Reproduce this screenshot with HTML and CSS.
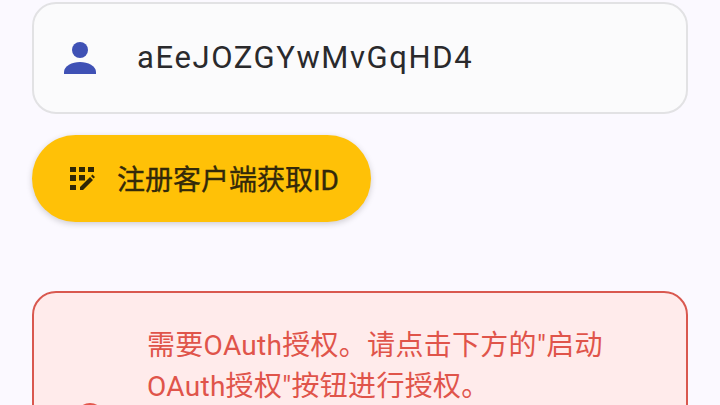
FILE: index.html
```html
<!DOCTYPE html>
<html lang="zh-CN">
<head>
<meta charset="utf-8">
<title>OAuth</title>
<link rel="stylesheet" href="styles.css">
</head>
<body>
<main class="page">
  <div class="field">
    <svg class="field-icon" viewBox="0 0 32 32" aria-hidden="true"><circle cx="16" cy="8" r="8"/><path d="M0 32v-2c0-6 8-10 16-10s16 4 16 10v2z"/></svg>
    <span class="field-value">aEeJOZGYwMvGqHD4</span>
  </div>
  <button class="action" type="button">
    <svg class="action-icon" viewBox="0 0 25 23" aria-hidden="true"><path d="M0 0h6v5H0zM9 0h6v5H9zM18 0h6v5h-6zM0 8h6v6H0zM9 8h6v5.500H9zM0 18h6v5H0zM10 23v-3L20 10l3 3L13 23zM21 9l1.500-1.500L25 10l-1.500 1.500z"/></svg>
    <span class="action-label">注册客户端获取ID</span>
  </button>
  <section class="notice">
    <svg class="notice-icon" viewBox="0 0 24 24" aria-hidden="true"><circle cx="12" cy="12" r="10.500"/></svg>
    <p class="notice-text">需要OAuth授权。请点击下方的"启动OAuth授权"按钮进行授权。</p>
  </section>
</main>
</body>
</html>
```
FILE: styles.css
```css
html, body {
  margin: 0;
  padding: 0;
  height: 405px;
  overflow: hidden;
  background: #fbf9ff;
}

.page {
  display: flex;
  flex-direction: column;
  align-items: flex-start;
  padding: 2px 32px 0;
  font-family: Roboto, "Noto Sans CJK SC", sans-serif;
}

.field {
  box-sizing: border-box;
  width: 656px;
  height: 112px;
  display: flex;
  align-items: center;
  padding-left: 30px;
  gap: 41px;
  background: #fbfbfc;
  border: 2px solid #e2e2e4;
  border-radius: 24px;
}

.field-icon {
  width: 32px;
  height: 32px;
  fill: #3f51b5;
  flex: none;
}

.field-value {
  font-size: 31px;
  color: #2a2a2c;
  letter-spacing: 1.6px;
  margin-bottom: 2px;
}

.action {
  margin-top: 21px;
  width: 339px;
  height: 87px;
  display: flex;
  align-items: center;
  gap: 22px;
  padding: 0 0 0 38px;
  border: 0;
  border-radius: 44px;
  background: #ffc107;
  box-shadow: 0 2px 6px rgba(0, 0, 0, 0.18);
  font: inherit;
  font-size: 28px;
  color: #33290a;
}

.action-icon {
  width: 25px;
  height: 23px;
  fill: #2f2606;
  flex: none;
}

.action-label {
  margin-bottom: 2px;
  -webkit-text-stroke: 0.35px #33290a;
}

.notice {
  box-sizing: border-box;
  margin-top: 69px;
  width: 656px;
  height: 200px;
  flex: none;
  display: flex;
  align-items: flex-start;
  gap: 41px;
  padding: 32px 60px 0 40px;
  background: #ffebeb;
  border: 2px solid #d9584f;
  border-radius: 24px;
}

.notice-icon {
  width: 32px;
  height: 32px;
  margin-top: 76px;
  fill: #e4574c;
  flex: none;
}

.notice-text {
  margin: 0;
  font-size: 28px;
  line-height: 41px;
  letter-spacing: 0.3px;
  color: #e0544a;
}
```
